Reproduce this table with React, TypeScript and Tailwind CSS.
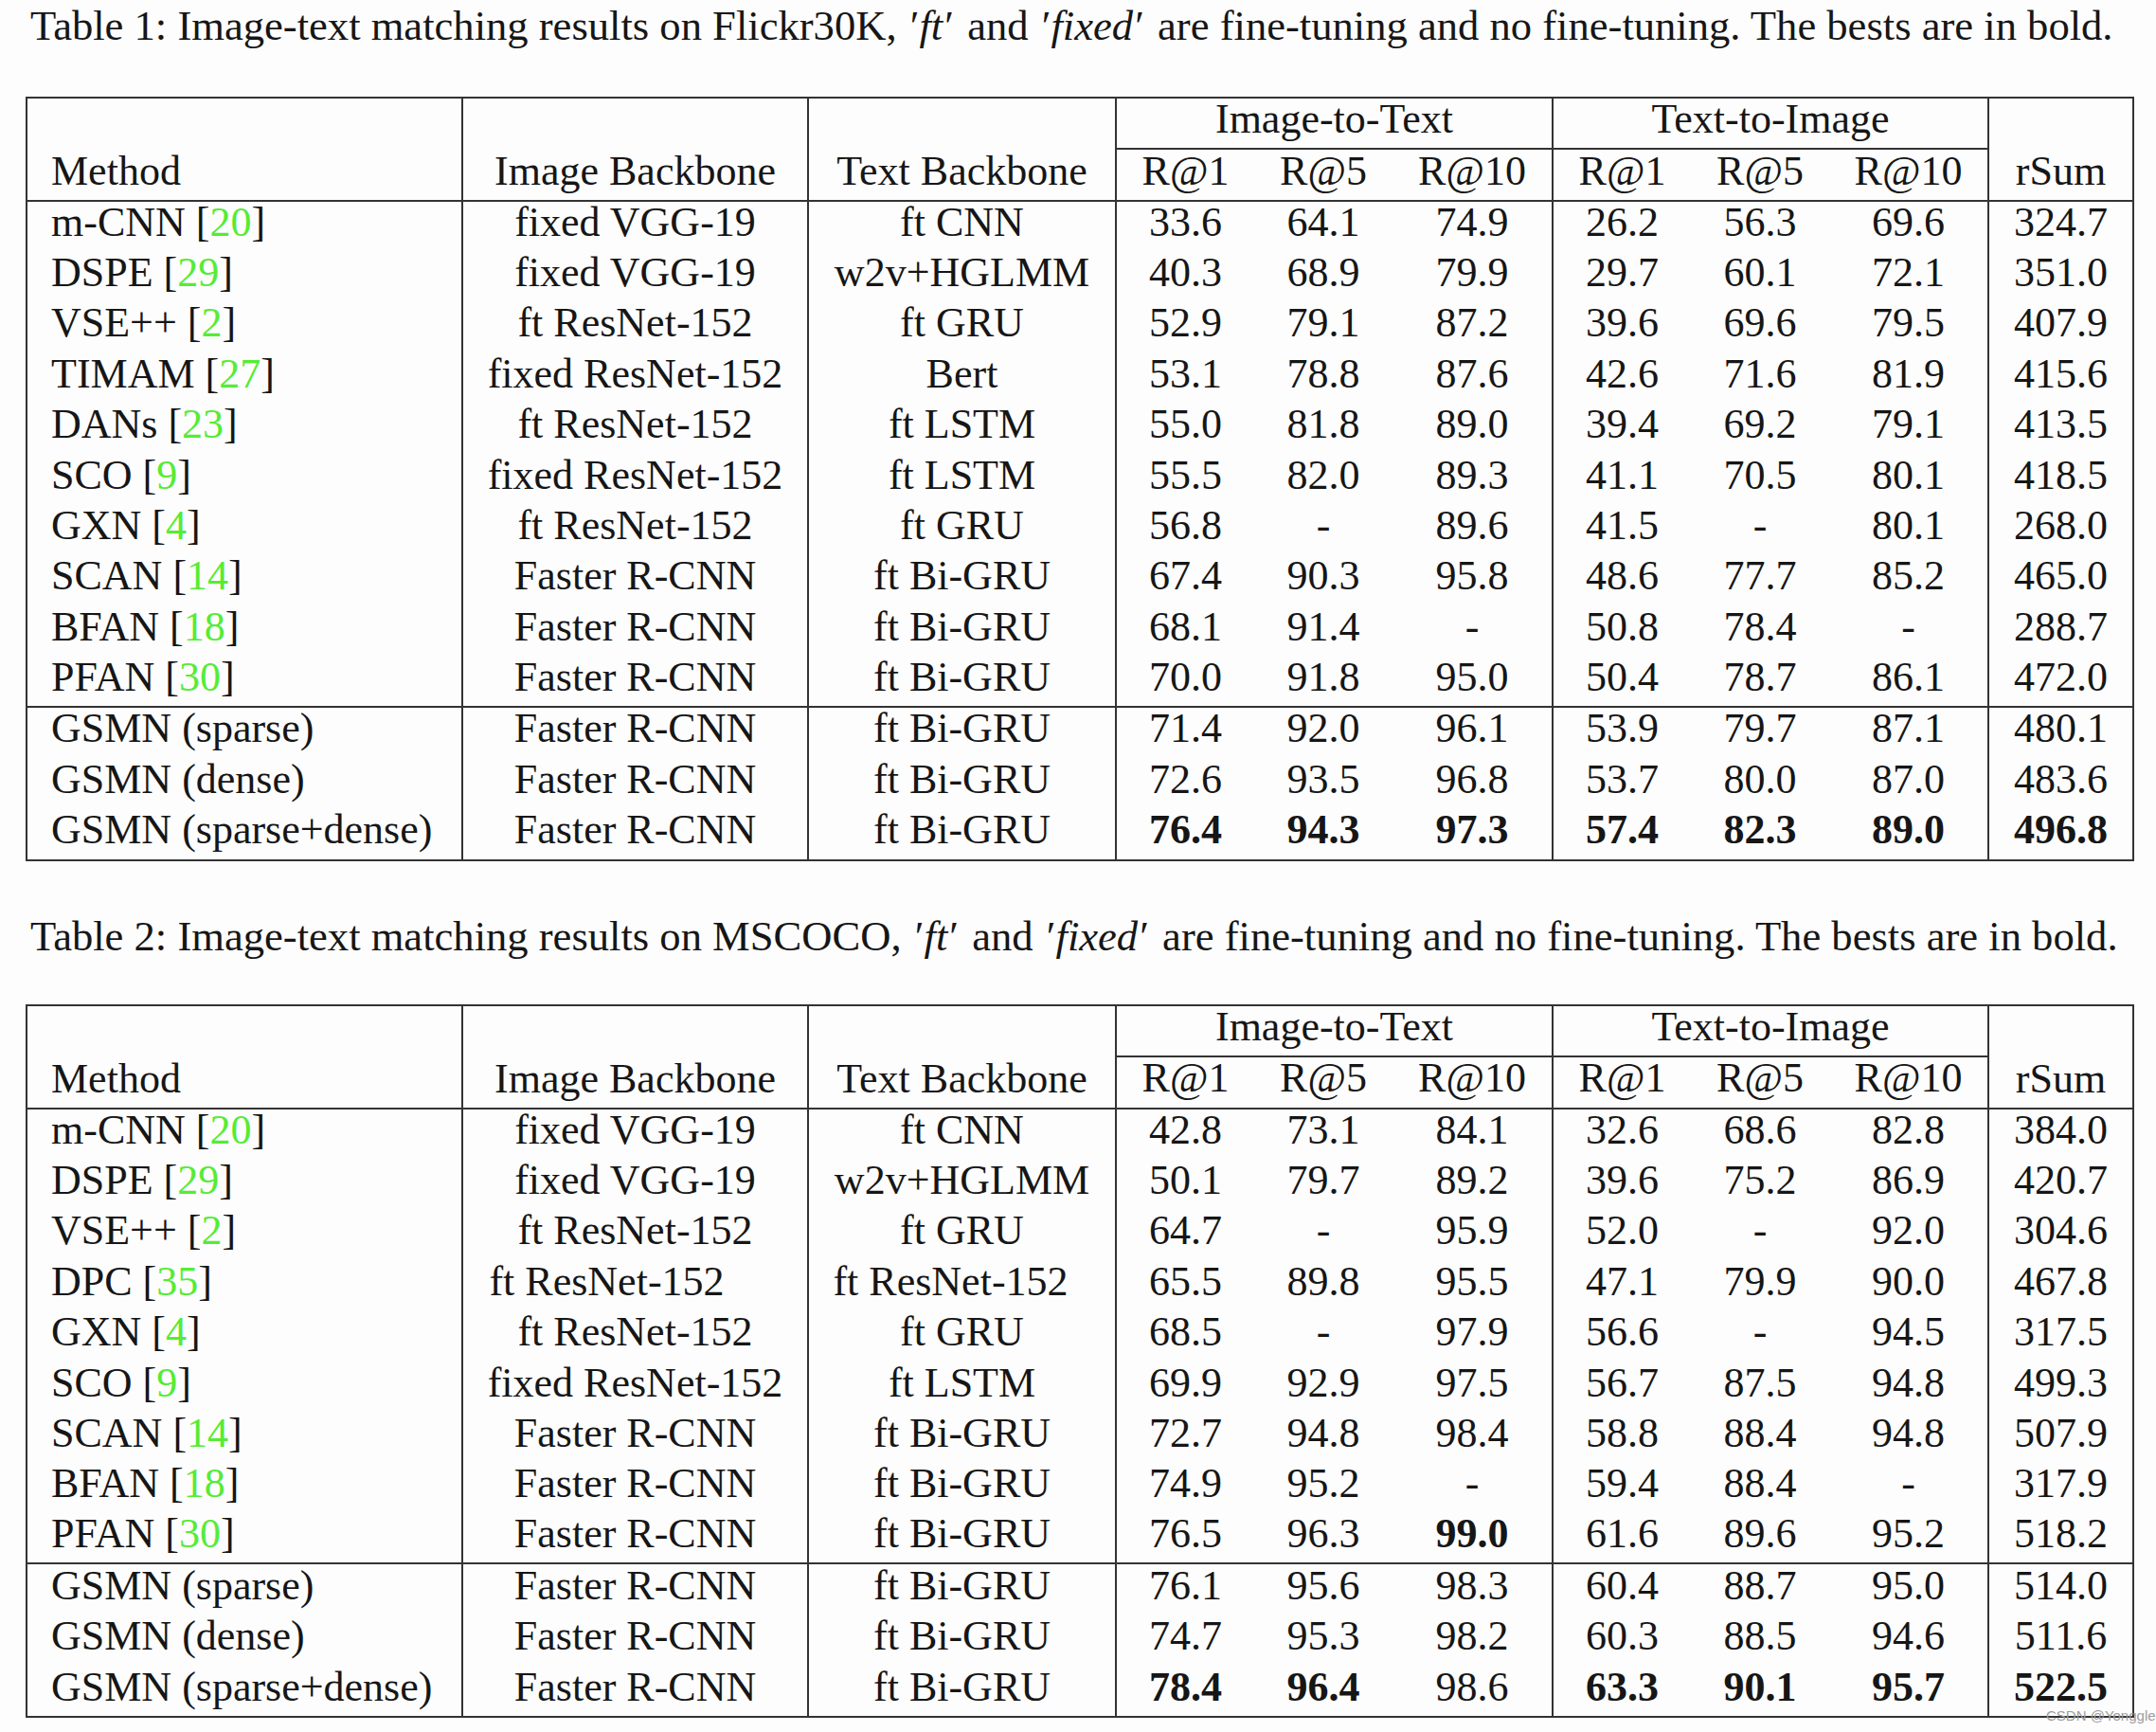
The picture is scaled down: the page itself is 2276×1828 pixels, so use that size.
import React from 'react';

type Row = {
  method: string;
  cite?: string;
  img: string;
  txt: string;
  vals: string[];
  imgClass?: string;
  txtClass?: string;
};

// '*' in front of a value means bold
const TABLE1: Row[] = [
  { method: 'm-CNN', cite: '20', img: 'fixed VGG-19', txt: 'ft CNN', vals: ['33.6', '64.1', '74.9', '26.2', '56.3', '69.6', '324.7'] },
  { method: 'DSPE', cite: '29', img: 'fixed VGG-19', txt: 'w2v+HGLMM', vals: ['40.3', '68.9', '79.9', '29.7', '60.1', '72.1', '351.0'] },
  { method: 'VSE++', cite: '2', img: 'ft ResNet-152', txt: 'ft GRU', vals: ['52.9', '79.1', '87.2', '39.6', '69.6', '79.5', '407.9'] },
  { method: 'TIMAM', cite: '27', img: 'fixed ResNet-152', txt: 'Bert', vals: ['53.1', '78.8', '87.6', '42.6', '71.6', '81.9', '415.6'] },
  { method: 'DANs', cite: '23', img: 'ft ResNet-152', txt: 'ft LSTM', vals: ['55.0', '81.8', '89.0', '39.4', '69.2', '79.1', '413.5'] },
  { method: 'SCO', cite: '9', img: 'fixed ResNet-152', txt: 'ft LSTM', vals: ['55.5', '82.0', '89.3', '41.1', '70.5', '80.1', '418.5'] },
  { method: 'GXN', cite: '4', img: 'ft ResNet-152', txt: 'ft GRU', vals: ['56.8', '-', '89.6', '41.5', '-', '80.1', '268.0'] },
  { method: 'SCAN', cite: '14', img: 'Faster R-CNN', txt: 'ft Bi-GRU', vals: ['67.4', '90.3', '95.8', '48.6', '77.7', '85.2', '465.0'] },
  { method: 'BFAN', cite: '18', img: 'Faster R-CNN', txt: 'ft Bi-GRU', vals: ['68.1', '91.4', '-', '50.8', '78.4', '-', '288.7'] },
  { method: 'PFAN', cite: '30', img: 'Faster R-CNN', txt: 'ft Bi-GRU', vals: ['70.0', '91.8', '95.0', '50.4', '78.7', '86.1', '472.0'] },
];

const GSMN1: Row[] = [
  { method: 'GSMN (sparse)', img: 'Faster R-CNN', txt: 'ft Bi-GRU', vals: ['71.4', '92.0', '96.1', '53.9', '79.7', '87.1', '480.1'] },
  { method: 'GSMN (dense)', img: 'Faster R-CNN', txt: 'ft Bi-GRU', vals: ['72.6', '93.5', '96.8', '53.7', '80.0', '87.0', '483.6'] },
  { method: 'GSMN (sparse+dense)', img: 'Faster R-CNN', txt: 'ft Bi-GRU', vals: ['*76.4', '*94.3', '*97.3', '*57.4', '*82.3', '*89.0', '*496.8'] },
];

const TABLE2: Row[] = [
  { method: 'm-CNN', cite: '20', img: 'fixed VGG-19', txt: 'ft CNN', vals: ['42.8', '73.1', '84.1', '32.6', '68.6', '82.8', '384.0'] },
  { method: 'DSPE', cite: '29', img: 'fixed VGG-19', txt: 'w2v+HGLMM', vals: ['50.1', '79.7', '89.2', '39.6', '75.2', '86.9', '420.7'] },
  { method: 'VSE++', cite: '2', img: 'ft ResNet-152', txt: 'ft GRU', vals: ['64.7', '-', '95.9', '52.0', '-', '92.0', '304.6'] },
  { method: 'DPC', cite: '35', img: 'ft ResNet-152', txt: 'ft ResNet-152', vals: ['65.5', '89.8', '95.5', '47.1', '79.9', '90.0', '467.8'], imgClass: 'pr-[60px]', txtClass: 'pr-[24px]' },
  { method: 'GXN', cite: '4', img: 'ft ResNet-152', txt: 'ft GRU', vals: ['68.5', '-', '97.9', '56.6', '-', '94.5', '317.5'] },
  { method: 'SCO', cite: '9', img: 'fixed ResNet-152', txt: 'ft LSTM', vals: ['69.9', '92.9', '97.5', '56.7', '87.5', '94.8', '499.3'] },
  { method: 'SCAN', cite: '14', img: 'Faster R-CNN', txt: 'ft Bi-GRU', vals: ['72.7', '94.8', '98.4', '58.8', '88.4', '94.8', '507.9'] },
  { method: 'BFAN', cite: '18', img: 'Faster R-CNN', txt: 'ft Bi-GRU', vals: ['74.9', '95.2', '-', '59.4', '88.4', '-', '317.9'] },
  { method: 'PFAN', cite: '30', img: 'Faster R-CNN', txt: 'ft Bi-GRU', vals: ['76.5', '96.3', '*99.0', '61.6', '89.6', '95.2', '518.2'] },
];

const GSMN2: Row[] = [
  { method: 'GSMN (sparse)', img: 'Faster R-CNN', txt: 'ft Bi-GRU', vals: ['76.1', '95.6', '98.3', '60.4', '88.7', '95.0', '514.0'] },
  { method: 'GSMN (dense)', img: 'Faster R-CNN', txt: 'ft Bi-GRU', vals: ['74.7', '95.3', '98.2', '60.3', '88.5', '94.6', '511.6'] },
  { method: 'GSMN (sparse+dense)', img: 'Faster R-CNN', txt: 'ft Bi-GRU', vals: ['*78.4', '*96.4', '98.6', '*63.3', '*90.1', '*95.7', '*522.5'] },
];

const LINE = 'border-[#333333]';

// math-mode quoted term, e.g. 'ft'
const Term: React.FC<{ children: React.ReactNode }> = ({ children }) => (
  <span className="px-[3px]">
    ′<i className="pr-[2px]">{children}</i>′
  </span>
);

const Caption: React.FC<{ num: number; dataset: string }> = ({ num, dataset }) => (
  <p className="pl-[5px] text-[44.6px] leading-[52px] whitespace-nowrap">
    Table {num}: Image-text matching results on {dataset}, <Term>ft</Term> and <Term>fixed</Term> are
    fine-tuning and no fine-tuning. The bests are in bold.
  </p>
);

const Value: React.FC<{ v: string }> = ({ v }) =>
  v.startsWith('*') ? <b className="font-bold">{v.slice(1)}</b> : <>{v}</>;

const DataRow: React.FC<{ row: Row; first?: boolean; tall?: boolean }> = ({ row, first, tall }) => {
  const top = first ? `border-t-2 ${LINE}` : '';
  const h = tall ? 'h-[54px]' : 'h-[53.4px]';
  const cell = `p-0 pb-[8px] align-middle text-center ${top}`;
  return (
    <tr className={h}>
      <td className={`p-0 pb-[8px] pl-[25px] align-middle text-left border-r-2 ${LINE} ${top}`}>
        {row.method}
        {row.cite && (
          <>
            {' '}[<span className="text-[#55ec35]">{row.cite}</span>]
          </>
        )}
      </td>
      <td className={`${cell} border-r-2 ${LINE} ${row.imgClass ?? ''}`}>{row.img}</td>
      <td className={`${cell} border-r-2 ${LINE} ${row.txtClass ?? ''}`}>{row.txt}</td>
      {row.vals.map((v, i) => (
        <td key={i} className={`${cell} ${i === 2 || i === 5 ? `border-r-2 ${LINE}` : ''}`}>
          <Value v={v} />
        </td>
      ))}
    </tr>
  );
};

const ResultsTable: React.FC<{ rows: Row[]; gsmn: Row[] }> = ({ rows, gsmn }) => (
  <table className={`table-fixed border-collapse w-[2224px] border-2 ${LINE} leading-[40px]`}>
    <colgroup>
      <col className="w-[460px]" />
      <col className="w-[365px]" />
      <col className="w-[325px]" />
      <col className="w-[146px]" />
      <col className="w-[146px]" />
      <col className="w-[169px]" />
      <col className="w-[146px]" />
      <col className="w-[146px]" />
      <col className="w-[168px]" />
      <col className="w-[153px]" />
    </colgroup>
    <thead>
      <tr className="h-[54px]">
        <th rowSpan={2} className={`p-0 pb-[10px] pl-[25px] align-bottom text-left font-normal border-r-2 ${LINE}`}>
          Method
        </th>
        <th rowSpan={2} className={`p-0 pb-[10px] align-bottom text-center font-normal border-r-2 ${LINE}`}>
          Image Backbone
        </th>
        <th rowSpan={2} className={`p-0 pb-[10px] align-bottom text-center font-normal border-r-2 ${LINE}`}>
          Text Backbone
        </th>
        <th colSpan={3} className={`p-0 pb-[8px] align-middle text-center font-normal border-r-2 border-b-2 ${LINE}`}>
          Image-to-Text
        </th>
        <th colSpan={3} className={`p-0 pb-[8px] align-middle text-center font-normal border-r-2 border-b-2 ${LINE}`}>
          Text-to-Image
        </th>
        <th rowSpan={2} className="p-0 pb-[10px] align-bottom text-center font-normal">
          rSum
        </th>
      </tr>
      <tr className="h-[55px]">
        {['R@1', 'R@5', 'R@10', 'R@1', 'R@5', 'R@10'].map((h, i) => (
          <th
            key={i}
            className={`p-0 pb-[8px] align-middle text-center font-normal ${i === 2 || i === 5 ? `border-r-2 ${LINE}` : ''}`}
          >
            {h}
          </th>
        ))}
      </tr>
    </thead>
    <tbody>
      {rows.map((r, i) => (
        <DataRow key={r.method} row={r} first={i === 0} />
      ))}
      {gsmn.map((r, i) => (
        <DataRow key={r.method} row={r} first={i === 0} tall />
      ))}
    </tbody>
  </table>
);

const App: React.FC = () => {
  return (
    <div className="relative min-h-[1828px] w-[2276px] bg-[#fdfdfd] text-[#161616] font-['Liberation_Serif','Times_New_Roman',serif] text-[44px] pl-[27px] pt-[1px] overflow-hidden">
      <Caption num={1} dataset="Flickr30K" />
      <div className="mt-[49px]">
        <ResultsTable rows={TABLE1} gsmn={GSMN1} />
      </div>
      <div className="mt-[53px]">
        <Caption num={2} dataset="MSCOCO" />
      </div>
      <div className="mt-[46px]">
        <ResultsTable rows={TABLE2} gsmn={GSMN2} />
      </div>

      {/* site watermark */}
      <span className="absolute left-[2160px] top-[1802px] whitespace-nowrap font-['Liberation_Sans',Arial,sans-serif] text-[15px] leading-[18px] text-[#9c9c9c]">
        CSDN @Yonggle
      </span>
    </div>
  );
};

export default App;
